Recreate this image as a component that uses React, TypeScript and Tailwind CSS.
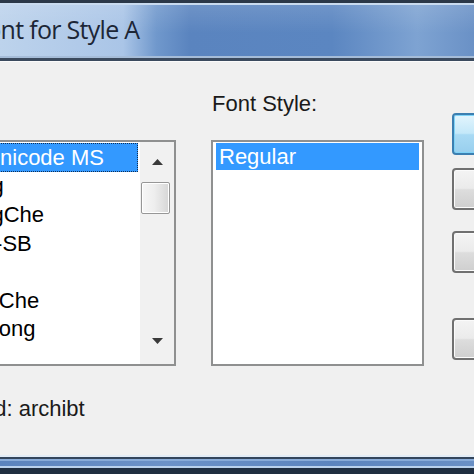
import React from "react";

const fonts = [
  "Arial Unicode MS",
  "Batang",
  "BatangChe",
  "DFKai-SB",
  "Dotum",
  "DotumChe",
  "FangSong",
  "Gulim",
];

function Btn({ def = false, label }: { def?: boolean; label: string }) {
  return (
    <div
      className={
        def
          ? "h-[42px] w-[80px] rounded-[4px] border-2 border-[#3c7fb1] bg-[linear-gradient(180deg,#e3f5fd_0%,#c4e8f9_48%,#a9daf4_52%,#98cfee_100%)] shadow-[inset_0_0_0_1px_#7fd3f7] flex items-center justify-center text-[22px] text-black"
          : "h-[42px] w-[80px] rounded-[4px] border-2 border-[#707070] bg-[linear-gradient(180deg,#f4f4f4_0%,#ebebeb_48%,#dddddd_52%,#cfcfcf_100%)] shadow-[inset_0_0_0_1px_#fbfbfb] flex items-center justify-center text-[22px] text-black"
      }
    >
      <span className="ml-[40px]">{label}</span>
    </div>
  );
}

function Arrow({ up }: { up: boolean }) {
  return (
    <svg width="11" height="6" viewBox="0 0 11 6">
      {up ? (
        <path d="M0 6 L5.5 0 L11 6 Z" fill="#3a3a3a" />
      ) : (
        <path d="M0 0 L11 0 L5.5 6 Z" fill="#3a3a3a" />
      )}
    </svg>
  );
}

export default function App() {
  return (
    <div className="w-[474px] h-[474px] overflow-hidden bg-[#f0f0f0] flex flex-col font-['Liberation_Sans',Arial,sans-serif]">
      {/* title bar */}
      <div className="h-[3px] shrink-0 bg-[#2b3848]" />
      <div className="h-[2px] shrink-0 bg-[#c9dbef]" />
      <div className="h-[51px] shrink-0 bg-[linear-gradient(180deg,rgba(255,255,255,0.12)_0%,rgba(255,255,255,0)_55%),linear-gradient(90deg,#bdd3ec_0%,#aac5e7_26%,#7098cc_33%,#5a84bf_40%,#5b86c1_70%,#7ea3d2_88%,#6a91c6_100%)] pt-[9px]">
        <div className="ml-[-26px] whitespace-nowrap text-[25px] leading-[30px] tracking-[-0.7px] text-[#1c2636] font-['Open_Sans',sans-serif]">
          Font for Style A
        </div>
      </div>
      <div className="h-[2px] shrink-0 bg-[#a5bcd8]" />
      <div className="h-[3px] shrink-0 bg-[#3b4a5e]" />
      <div className="h-[1px] shrink-0 bg-[#fbfbfb]" />

      {/* body */}
      <div className="h-[393px] shrink-0 flex items-start">
        {/* font column */}
        <div className="ml-[-100px] w-[276px] shrink-0 pt-[29px] flex flex-col">
          <div className="h-[25px] text-[22px] leading-[25px] text-[#1a1a1a] pl-[4px]">Font:</div>
          <div className="mt-[24px] h-[226px] border-2 border-[#8f9090] bg-white flex">
            <div className="flex-1 pt-[1px] overflow-hidden">
              {fonts.map((f, i) => (
                <div
                  key={f}
                  className={
                    i === 0
                      ? "h-[28.6px] mr-[2px] bg-[#3399ff] text-white border border-dotted border-[#0f2f55] flex items-center pl-[31px] text-[22px] whitespace-nowrap"
                      : "h-[28.6px] mr-[2px] text-black flex items-center pl-[32px] text-[22px] whitespace-nowrap"
                  }
                >
                  {f}
                </div>
              ))}
            </div>
            <div className="w-[34px] shrink-0 bg-[#f1f1f1] flex flex-col items-center">
              <div className="h-[38px] flex items-center justify-center pt-[2px]">
                <Arrow up />
              </div>
              <div className="ml-[-3px] mt-[2px] w-[29px] h-[32px] rounded-[2px] border border-[#979797] bg-[linear-gradient(90deg,#f7f7f7_0%,#eeeeee_45%,#d6d6d6_100%)] shadow-[inset_0_0_0_1px_#ffffff]" />
              <div className="flex-1" />
              <div className="h-[36px] flex items-start justify-center pt-[10px]">
                <Arrow up={false} />
              </div>
            </div>
          </div>
          <div className="mt-[30px] ml-[-33px] whitespace-nowrap text-[22px] leading-[25px] text-[#1a1a1a]">
            Font file found: archibt
          </div>
        </div>

        {/* font style column */}
        <div className="ml-[35px] w-[213px] shrink-0 pt-[29px] flex flex-col">
          <div className="h-[25px] text-[22px] leading-[25px] text-[#1a1a1a] pl-[1px]">Font Style:</div>
          <div className="mt-[24px] h-[226px] border-2 border-[#8f9090] bg-white pt-[1px] px-[3px]">
            <div className="h-[27px] bg-[#3399ff] text-white flex items-center pl-[3px] text-[22px]">Regular</div>
          </div>
        </div>

        {/* buttons */}
        <div className="ml-[28px] w-[80px] shrink-0 flex flex-col pt-[51px]">
          <Btn def label="OK" />
          <div className="mt-[13px]">
            <Btn label="Cancel" />
          </div>
          <div className="mt-[21px]">
            <Btn label="Apply" />
          </div>
          <div className="mt-[45px]">
            <Btn label="Help" />
          </div>
        </div>
      </div>

      {/* bottom frame */}
      <div className="h-[2px] shrink-0 bg-[#e2ecf6]" />
      <div className="h-[2px] shrink-0 bg-[#33455b]" />
      <div className="h-[7px] shrink-0 bg-[linear-gradient(90deg,#5a83bd_0%,#6c92c8_35%,#5b84be_70%,#6a90c5_100%)] shadow-[inset_0_2px_0_#88abd8]" />
      <div className="h-[2px] shrink-0 bg-[#b9d1ec]" />
      <div className="h-[6px] shrink-0 bg-[#1f2e40]" />
    </div>
  );
}
